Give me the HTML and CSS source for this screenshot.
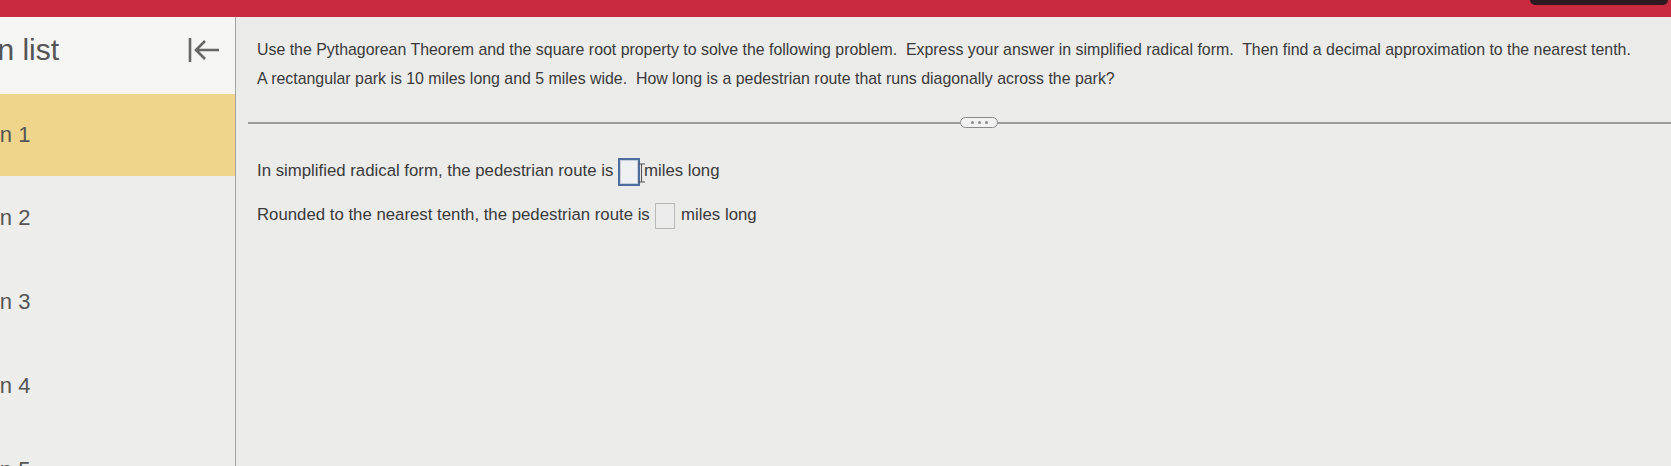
FILE: index.html
```html
<!DOCTYPE html>
<html lang="en">
<head>
<meta charset="utf-8">
<title>Question</title>
<link rel="stylesheet" href="styles.css">
</head>
<body>
<header class="topbar"><div class="topbtn"></div></header>
<div class="layout">
  <aside class="sidebar">
    <div class="side-head">
      <span class="side-title">Question list</span>
      <svg class="collapse" width="32" height="26" viewBox="0 0 32 26" aria-hidden="true">
        <path d="M2 1 V25" stroke="#666" stroke-width="2.6" fill="none"/>
        <path d="M31 13 H8 M17 4 L8 13 L17 22" stroke="#666" stroke-width="2.6" fill="none" stroke-linejoin="miter"/>
      </svg>
    </div>
    <ul class="qlist">
      <li class="qitem current"><span class="qlabel">Question 1</span></li>
      <li class="qitem"><span class="qlabel">Question 2</span></li>
      <li class="qitem"><span class="qlabel">Question 3</span></li>
      <li class="qitem"><span class="qlabel">Question 4</span></li>
      <li class="qitem"><span class="qlabel">Question 5</span></li>
    </ul>
  </aside>
  <main class="content">
    <p class="prompt">Use the Pythagorean Theorem and the square root property to solve the following problem.&nbsp; Express your answer in simplified radical form.&nbsp; Then find a decimal approximation to the nearest tenth.</p>
    <p class="prompt">A rectangular park is 10 miles long and 5 miles wide.&nbsp; How long is a pedestrian route that runs diagonally across the park?</p>
    <div class="divider">
      <span class="rule rule-left"></span>
      <span class="pill"><span class="dot"></span><span class="dot"></span><span class="dot"></span></span>
      <span class="rule"></span>
    </div>
    <p class="answer first">In simplified radical form, the pedestrian route is <span class="boxwrap"><span class="box focused"></span><svg class="ibeam" width="9" height="20" viewBox="0 0 9 20" aria-hidden="true"><path d="M1 1 H8 M4.5 1 V19 M1 19 H8" stroke="#555" stroke-width="1.1" fill="none"/></svg></span>miles long</p>
    <p class="answer">Rounded to the nearest tenth, the pedestrian route is <span class="box"></span> miles long</p>
  </main>
</div>
</body>
</html>
```
FILE: styles.css
```css
html, body {
  margin: 0;
  padding: 0;
}
body {
  width: 1671px;
  height: 466px;
  overflow: hidden;
  background: #eaebe9;
  font-family: "Liberation Sans", Arial, sans-serif;
  color: #3a3a3a;
}
.topbar {
  height: 17px;
  background: #c92a40;
  display: flex;
  justify-content: flex-end;
  align-items: flex-start;
  padding-right: 3px;
}
.topbtn {
  width: 138px;
  height: 5px;
  background: #2b1b20;
  border-radius: 0 0 6px 6px;
}
.layout {
  display: flex;
  height: 449px;
}
.sidebar {
  width: 235px;
  flex: none;
  border-right: 1px solid #a3a3a3;
  background: #ededec;
  overflow: hidden;
  display: flex;
  flex-direction: column;
}
.side-head {
  flex: none;
  height: 77px;
  box-sizing: border-box;
  padding: 0 15px 12px 0;
  background: #f5f5f4;
  display: flex;
  align-items: center;
  justify-content: space-between;
}
.side-title {
  font-size: 30px;
  line-height: 30px;
  color: #555;
  white-space: nowrap;
  margin-left: -106px;
}
.collapse {
  display: block;
  flex: none;
}
.qlist {
  flex: none;
  list-style: none;
  margin: 0;
  padding: 0;
}
.qitem {
  height: 84px;
  display: flex;
  align-items: center;
  font-size: 22px;
  color: #555;
  white-space: nowrap;
}
.qitem.current {
  height: 82px;
  background: #efd58b;
}
.qlabel {
  margin-left: -76px;
}
.content {
  flex: 1;
  padding: 18px 0 0 21px;
  background: #ebebea;
}
.prompt {
  margin: 0;
  font-size: 15.9px;
  line-height: 29px;
  white-space: nowrap;
}
.divider {
  margin: 24px 0 0 -9px;
  height: 11px;
  display: flex;
  align-items: center;
}
.rule {
  flex: 1;
  height: 0;
  border-top: 2px solid #9a9a9a;
}
.rule-left {
  flex: none;
  width: 712px;
}
.pill {
  width: 36px;
  height: 9px;
  border: 1.5px solid #8a8a8a;
  border-radius: 6px;
  background: #f2f2f2;
  display: flex;
  align-items: center;
  justify-content: center;
  gap: 4px;
}
.dot {
  width: 3px;
  height: 3px;
  border-radius: 50%;
  background: #8a8a8a;
}
.answer {
  margin: 0;
  font-size: 16.8px;
  line-height: 44px;
  white-space: nowrap;
}
.answer.first {
  margin-top: 21px;
}
.boxwrap {
  position: relative;
  display: inline-block;
  vertical-align: middle;
  margin-right: 4px;
}
.box {
  display: inline-block;
  vertical-align: middle;
  width: 18px;
  height: 24px;
  border: 1px solid #b8b8b8;
  background: #ececec;
  margin: 0 1px 0 1px;
}
.box.focused {
  display: block;
  width: 18px;
  height: 24px;
  border: 2px solid #4d6d9e;
  box-shadow: inset 0 0 0 1px #c5cfdc;
  background: #eef0f2;
  margin: 0;
}
.ibeam {
  position: absolute;
  left: 19px;
  top: 5px;
}
```
